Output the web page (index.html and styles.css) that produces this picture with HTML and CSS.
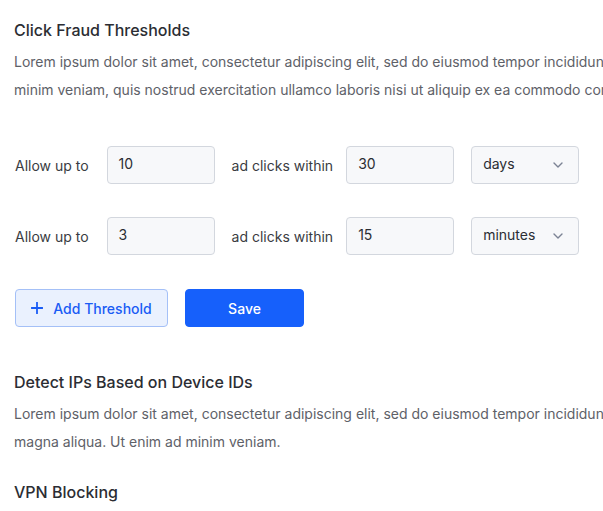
FILE: index.html
```html
<!DOCTYPE html>
<html>
<head>
<meta charset="utf-8">
<link rel="stylesheet" href="styles.css">
</head>
<body>
<main class="page">
  <section class="section">
    <h2 class="title">Click Fraud Thresholds</h2>
    <p class="desc"><span class="line">Lorem ipsum dolor sit amet, consectetur adipiscing elit, sed do eiusmod tempor incididunt ut labore et dolore magna aliqua. Ut enim ad</span><span class="line">minim veniam, quis nostrud exercitation ullamco laboris nisi ut aliquip ex ea commodo consequat.</span></p>

    <div class="rules">
      <div class="rule">
        <span class="label first">Allow up to</span>
        <div class="field">10</div>
        <span class="label">ad clicks within</span>
        <div class="field">30</div>
        <div class="field select"><span>days</span><svg class="chev" width="10" height="6" viewBox="0 0 10 6"><path d="M1 1l4 4 4-4" fill="none" stroke="#7b8394" stroke-width="1.4" stroke-linecap="round" stroke-linejoin="round"/></svg></div>
      </div>
      <div class="rule">
        <span class="label first">Allow up to</span>
        <div class="field">3</div>
        <span class="label">ad clicks within</span>
        <div class="field">15</div>
        <div class="field select"><span>minutes</span><svg class="chev" width="10" height="6" viewBox="0 0 10 6"><path d="M1 1l4 4 4-4" fill="none" stroke="#7b8394" stroke-width="1.4" stroke-linecap="round" stroke-linejoin="round"/></svg></div>
      </div>
    </div>

    <div class="actions">
      <button class="btn btn-secondary"><svg class="plus" width="12" height="12" viewBox="0 0 12 12"><path d="M6 0.5v11M0.5 6h11" stroke="#1a5cf5" stroke-width="1.8" stroke-linecap="round"/></svg>Add Threshold</button>
      <button class="btn btn-primary">Save</button>
    </div>
  </section>

  <section class="section second">
    <h2 class="title">Detect IPs Based on Device IDs</h2>
    <p class="desc"><span class="line">Lorem ipsum dolor sit amet, consectetur adipiscing elit, sed do eiusmod tempor incididunt ut labore et dolore</span><span class="line">magna aliqua. Ut enim ad minim veniam.</span></p>
  </section>

  <section class="section third">
    <h2 class="title">VPN Blocking</h2>
  </section>
</main>
</body>
</html>
```
FILE: styles.css
```css
html, body {
  margin: 0;
  padding: 0;
  background: #ffffff;
  overflow: hidden;
}
body {
  font-family: "Inter", "Liberation Sans", sans-serif;
  color: #2b2d33;
}
.page {
  padding: 20px 0 0 14px;
  width: 900px;
}
.title {
  margin: 0;
  font-size: 16px;
  line-height: 20px;
  font-weight: 500;
  color: #2b2d33;
}
.desc {
  margin: 8px 0 0;
  font-size: 14px;
  line-height: 28px;
  color: #5e6168;
}
.line {
  display: block;
  white-space: nowrap;
}
.rules {
  margin-top: 42px;
  display: flex;
  flex-direction: column;
  gap: 33px;
}
.rule {
  display: flex;
  align-items: center;
}
.label {
  font-size: 14px;
  color: #3a3c42;
  margin: 0 13px 0 17px;
  white-space: nowrap;
}
.label.first {
  margin-left: 1px;
  margin-right: 18px;
}
.field {
  box-sizing: border-box;
  width: 108px;
  height: 38px;
  border: 1px solid #d3d7de;
  border-radius: 4px;
  background: #f7f8fa;
  font-size: 14px;
  color: #2b2d33;
  padding: 0 11px 3px;
  display: flex;
  align-items: center;
}
.select {
  margin-left: 17px;
  justify-content: space-between;
  padding-right: 15px;
}
.chev {
  margin-top: 3px;
}
.actions {
  margin-top: 34px;
  display: flex;
  gap: 17px;
  padding-left: 1px;
}
.btn {
  box-sizing: border-box;
  height: 38px;
  border-radius: 4px;
  font-family: inherit;
  font-size: 14px;
  font-weight: 500;
  display: flex;
  align-items: center;
  justify-content: center;
  cursor: pointer;
}
.btn-secondary {
  width: 153px;
  background: #eaf1fe;
  border: 1px solid #a4c0f7;
  color: #1a5cf5;
  gap: 10px;
  padding: 0;
}
.btn-primary {
  width: 119px;
  background: #1660fb;
  border: 1px solid #1660fb;
  color: #ffffff;
}
.second {
  margin-top: 45px;
}
.third {
  margin-top: 26px;
}
```
